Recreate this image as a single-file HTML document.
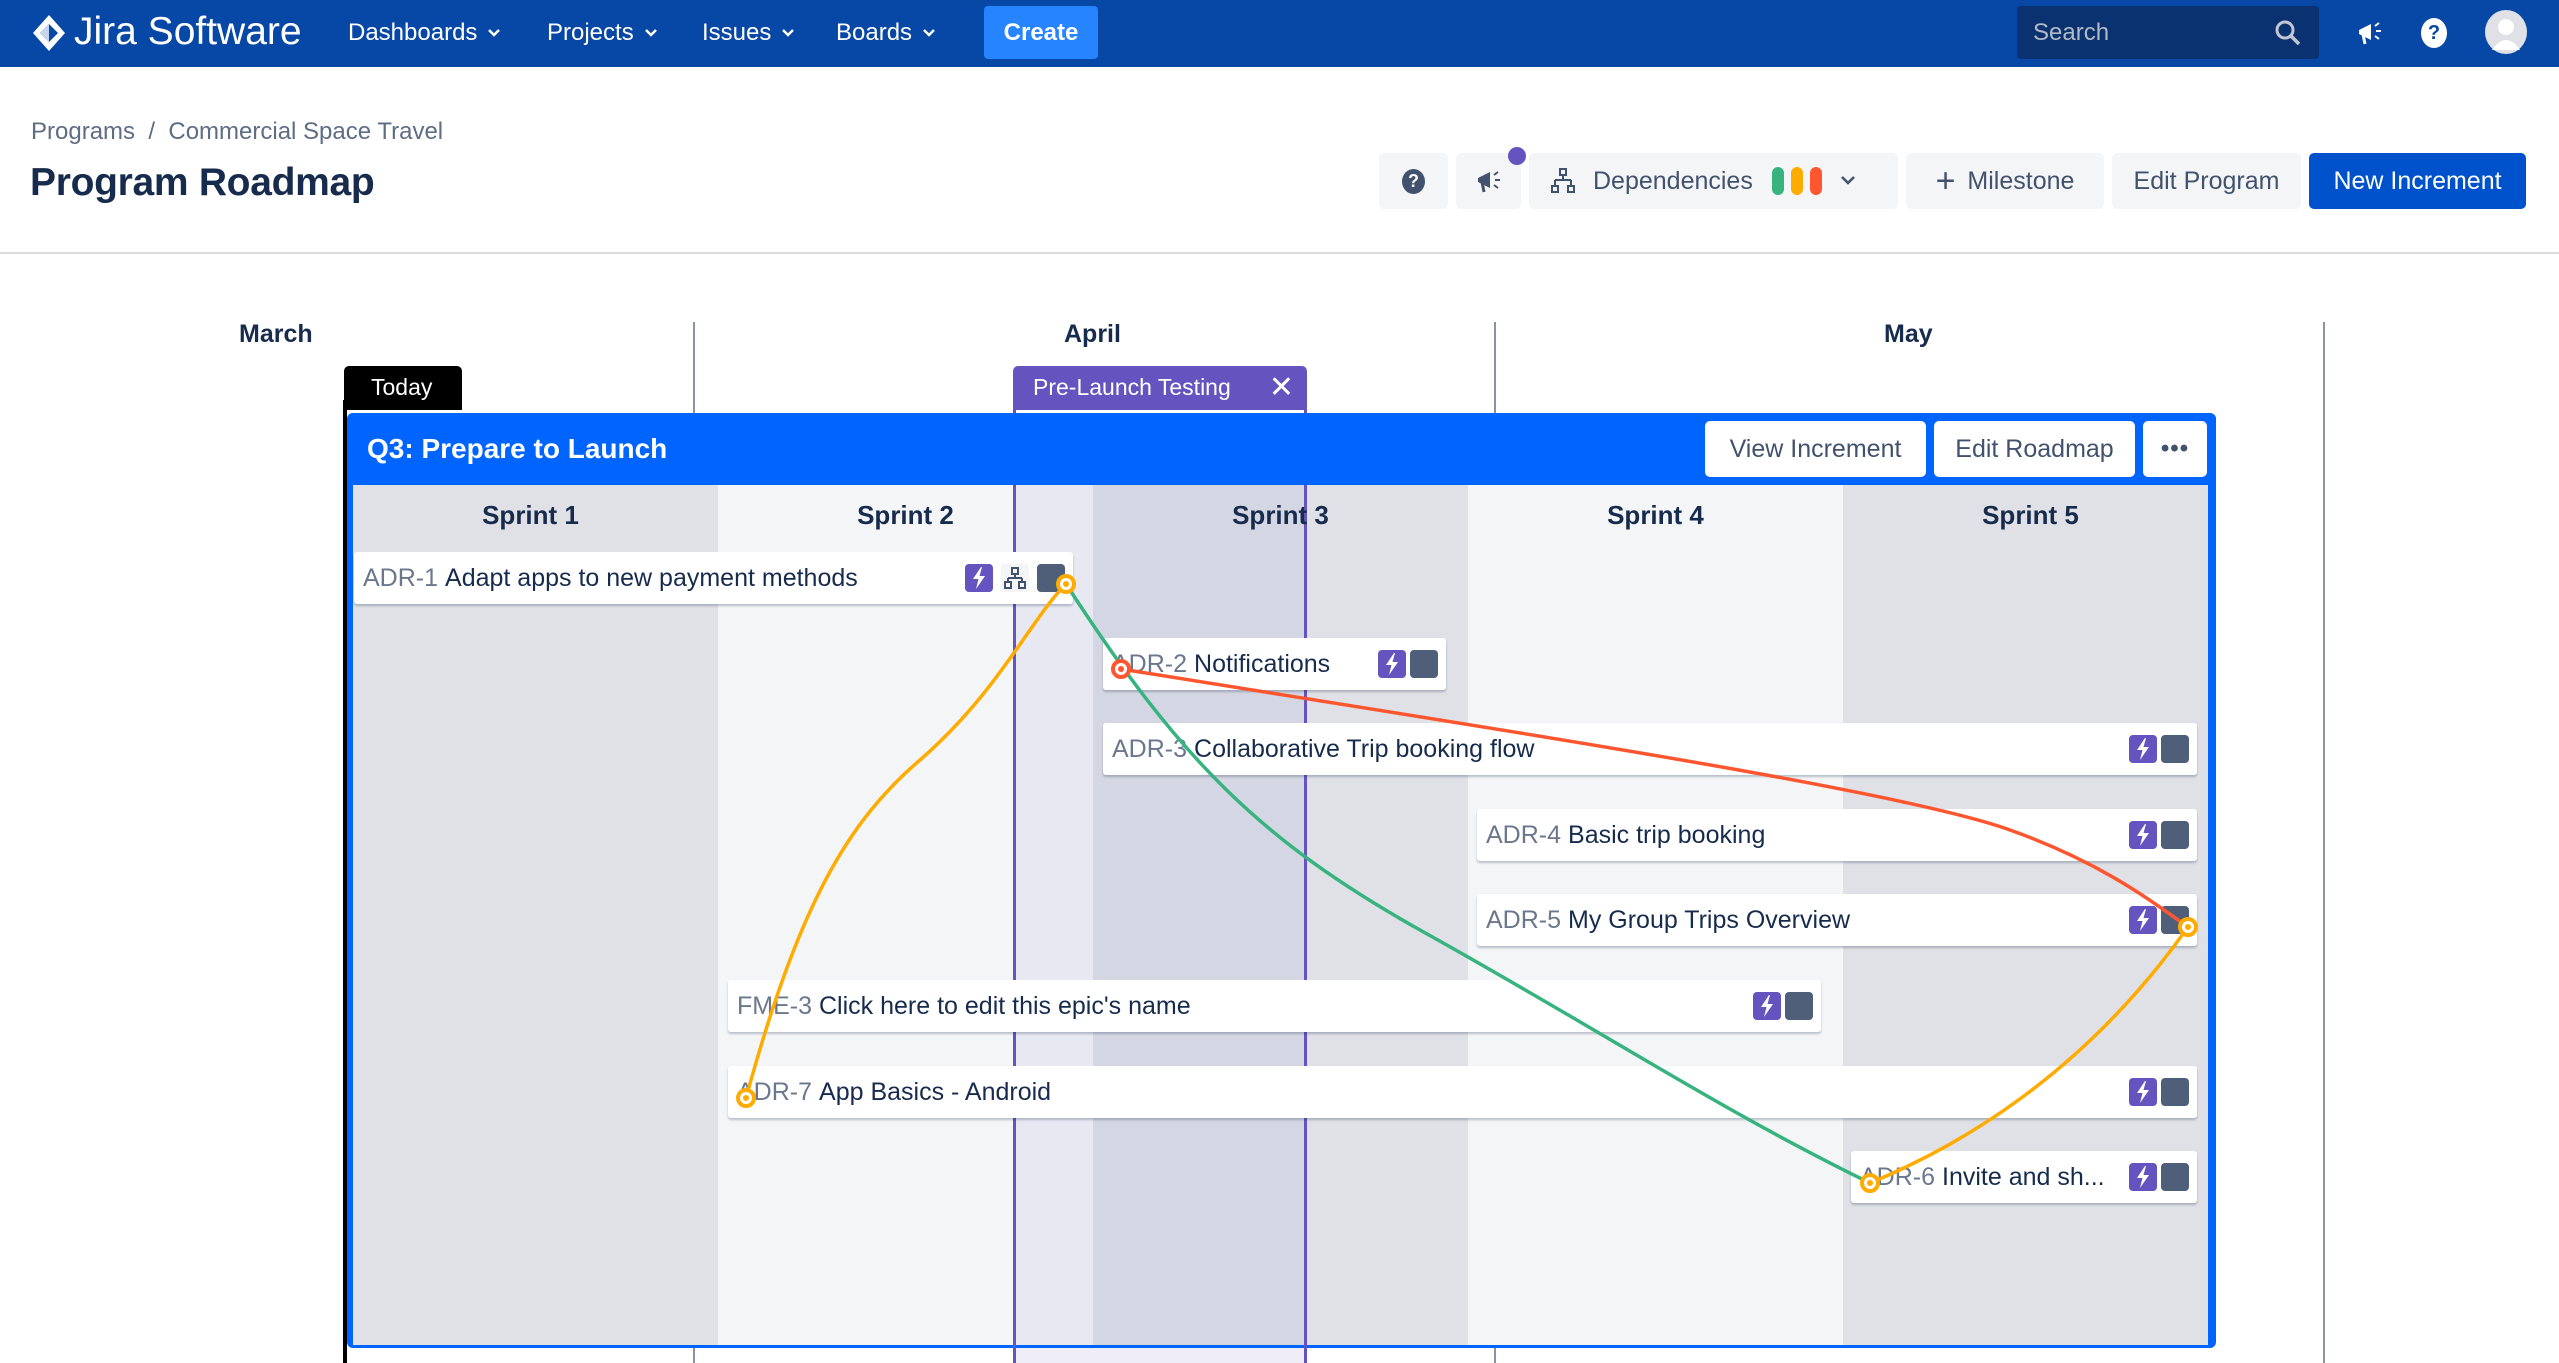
<!DOCTYPE html>
<html><head><meta charset="utf-8"><style>
*{box-sizing:border-box;margin:0;padding:0}
body{width:2559px;height:1363px;position:relative;overflow:hidden;background:#fff;font-family:"Liberation Sans",sans-serif;color:#172b4d}
.a{position:absolute}
.nav{left:0;top:0;width:2559px;height:67px;background:#0747a6}
.nt{color:#fff;font-size:24px;top:19px;display:flex;align-items:center}
.nt svg{margin-left:10px}
.btn{background:#f4f5f7;border-radius:5px;top:153px;height:56px;font-size:25px;color:#42526e;display:flex;align-items:center;justify-content:center}
.ml{top:322px;width:2px;height:1041px;background:#8993a4}
.mo{top:320px;font-size:25px;font-weight:bold;color:#172b4d}
.col{top:485px;height:860px}
.sp{top:500px;font-size:26px;font-weight:bold;color:#172b4d;text-align:center;width:375px}
.card{background:#fff;height:52px;border-radius:3px;box-shadow:0 2px 2px rgba(9,30,66,.25);font-size:25px;display:flex;align-items:center;padding-left:9px;white-space:nowrap}
.card .k{color:#6b778c;margin-right:7px}
.ic{position:absolute;top:12px;width:28px;height:28px;border-radius:4px}
.pu{background:#6554c0}
.sl{background:#505f79}
.wb{background:#fff;border-radius:5px;height:56px;top:421px;font-size:25px;color:#42526e;display:flex;align-items:center;justify-content:center}
</style></head><body>
<div class="a nav"></div>
<svg class="a" style="left:32px;top:15px" width="34" height="36" viewBox="0 0 34 36"><path d="M17 0 L33 18 L17 36 L1 18Z" fill="#fff"/><path d="M17 9 L26 18 L17 27 L8 18Z" fill="#0747a6"/><path d="M17 9 L17 27 L8 18Z" fill="#c7d5ec"/></svg>
<div class="a" style="left:74px;top:10px;color:#fff;font-size:39px">Jira Software</div>
<div class="a nt" style="left:348px">Dashboards<svg width="14" height="10"><path d="M2 2 L7 7 L12 2" stroke="#fff" stroke-width="2.5" fill="none"/></svg></div>
<div class="a nt" style="left:547px">Projects<svg width="14" height="10"><path d="M2 2 L7 7 L12 2" stroke="#fff" stroke-width="2.5" fill="none"/></svg></div>
<div class="a nt" style="left:702px">Issues<svg width="14" height="10"><path d="M2 2 L7 7 L12 2" stroke="#fff" stroke-width="2.5" fill="none"/></svg></div>
<div class="a nt" style="left:836px">Boards<svg width="14" height="10"><path d="M2 2 L7 7 L12 2" stroke="#fff" stroke-width="2.5" fill="none"/></svg></div>
<div class="a" style="left:984px;top:6px;width:114px;height:53px;background:#2684ff;border-radius:4px;color:#fff;font-size:24px;font-weight:bold;display:flex;align-items:center;justify-content:center">Create</div>
<div class="a" style="left:2017px;top:6px;width:302px;height:53px;background:#0a3270;border-radius:4px;color:#b3bac5;font-size:24px;padding:13px 0 0 16px">Search</div>
<svg class="a" style="left:2273px;top:18px" width="30" height="30"><circle cx="12" cy="12" r="8" stroke="#c1c7d0" stroke-width="3" fill="none"/><path d="M18 18 L26 26" stroke="#c1c7d0" stroke-width="3.5"/></svg>
<svg class="a" style="left:2355px;top:18px" width="30" height="30"><path d="M4 12 L16 6 L16 22 L4 16Z" fill="#fff"/><path d="M8 16 L10 26" stroke="#fff" stroke-width="3"/><path d="M20 8 L24 5 M21 13 L26 13 M20 18 L24 21" stroke="#fff" stroke-width="2"/></svg>
<div class="a" style="left:2421px;top:18px;width:26px;height:30px;border-radius:50%;background:#fff;color:#0747a6;font-weight:bold;font-size:20px;text-align:center;line-height:30px">?</div>
<div class="a" style="left:2485px;top:10px;width:42px;height:44px;border-radius:50%;background:#dfe1e6"></div>
<svg class="a" style="left:2485px;top:10px" width="42" height="44"><circle cx="21" cy="17" r="8" fill="#fff"/><path d="M7 40 Q21 20 35 40Z" fill="#fff"/></svg>

<div class="a" style="left:31px;top:118px;font-size:24px;color:#5e6c84">Programs &nbsp;/ &nbsp;Commercial Space Travel</div>
<div class="a" style="left:30px;top:161px;font-size:39px;font-weight:bold;color:#172b4d;letter-spacing:-0.3px">Program Roadmap</div>

<div class="a btn" style="left:1379px;width:69px"><div style="width:23px;height:25px;border-radius:50%;background:#42526e;color:#fff;font-size:18px;font-weight:bold;text-align:center;line-height:25px">?</div></div>
<div class="a btn" style="left:1456px;width:65px"><svg width="30" height="30"><path d="M4 12 L16 6 L16 22 L4 16Z" fill="#42526e"/><path d="M8 16 L10 26" stroke="#42526e" stroke-width="3"/><path d="M20 9 L24 6 M21 14 L26 14 M20 19 L24 22" stroke="#42526e" stroke-width="2"/></svg></div>
<div class="a" style="left:1508px;top:147px;width:18px;height:18px;border-radius:50%;background:#6554c0"></div>
<div class="a btn" style="left:1529px;width:369px;justify-content:flex-start;padding-left:22px"><svg width="24" height="26" style="margin-right:18px"><rect x="9" y="1" width="6" height="6" fill="none" stroke="#42526e" stroke-width="2"/><path d="M12 7 V12 M4 12 H20 M4 12 V18 M20 12 V18" stroke="#42526e" stroke-width="2" fill="none"/><rect x="1" y="18" width="6" height="6" fill="none" stroke="#42526e" stroke-width="2"/><rect x="17" y="18" width="6" height="6" fill="none" stroke="#42526e" stroke-width="2"/></svg>Dependencies<span style="display:inline-block;width:12px;height:28px;border-radius:6px;background:#36b37e;margin-left:19px"></span><span style="display:inline-block;width:12px;height:28px;border-radius:6px;background:#ffab00;margin-left:7px"></span><span style="display:inline-block;width:12px;height:28px;border-radius:6px;background:#ff5630;margin-left:7px"></span><svg width="16" height="12" style="margin-left:18px"><path d="M2 2 L8 8 L14 2" stroke="#42526e" stroke-width="2.5" fill="none"/></svg></div>
<div class="a btn" style="left:1906px;width:198px"><span style="font-size:34px;margin-right:12px;font-weight:300">+</span>Milestone</div>
<div class="a btn" style="left:2112px;width:189px">Edit Program</div>
<div class="a btn" style="left:2309px;width:217px;background:#0052cc;color:#fff">New Increment</div>
<div class="a" style="left:0;top:252px;width:2559px;height:2px;background:#dcdcdc"></div>

<div class="a mo" style="left:239px">March</div>
<div class="a mo" style="left:1064px">April</div>
<div class="a mo" style="left:1884px">May</div>
<div class="a ml" style="left:693px"></div>
<div class="a ml" style="left:1494px"></div>
<div class="a ml" style="left:2323px"></div>

<div class="a" style="left:344px;top:366px;width:118px;height:44px;background:#000;border-radius:5px 5px 0 0;color:#fff;font-size:23px;padding:8px 0 0 27px">Today</div>
<div class="a" style="left:343px;top:400px;width:4px;height:963px;background:#000"></div>

<div class="a" style="left:347px;top:413px;width:1869px;height:935px;background:#0065ff;border-radius:6px"></div>
<div class="a col" style="left:353px;width:365px;background:#dfe1e6"></div>
<div class="a col" style="left:718px;width:375px;background:#f4f5f7"></div>
<div class="a col" style="left:1093px;width:375px;background:#dfe1e6"></div>
<div class="a col" style="left:1468px;width:375px;background:#f4f5f7"></div>
<div class="a col" style="left:1843px;width:365px;background:#dfe1e6"></div>
<div class="a" style="left:1014px;top:485px;width:293px;height:860px;background:rgba(101,84,192,0.08)"></div>
<div class="a" style="left:1014px;top:1348px;width:293px;height:15px;background:#efeef8"></div>
<div class="a" style="left:1013px;top:405px;width:3px;height:958px;background:#6554c0"></div>
<div class="a" style="left:1304px;top:405px;width:3px;height:958px;background:#6554c0"></div>
<div class="a" style="left:1013px;top:366px;width:294px;height:44px;background:#6554c0;border-radius:5px 5px 0 0;color:#fff;font-size:23px;padding:8px 0 0 20px">Pre-Launch Testing<span style="position:absolute;right:13px;top:4px;font-size:30px">✕</span></div>
<div class="a" style="left:347px;top:413px;width:1869px;height:72px;background:#0065ff;border-radius:6px 6px 0 0"></div>
<div class="a" style="left:367px;top:433px;color:#fff;font-size:28px;font-weight:bold">Q3: Prepare to Launch</div>
<div class="a wb" style="left:1705px;width:221px">View Increment</div>
<div class="a wb" style="left:1934px;width:201px">Edit Roadmap</div>
<div class="a wb" style="left:2143px;width:64px;font-weight:bold;color:#42526e;font-size:24px;letter-spacing:1px">•••</div>

<div class="a sp" style="left:343px">Sprint 1</div>
<div class="a sp" style="left:718px">Sprint 2</div>
<div class="a sp" style="left:1093px">Sprint 3</div>
<div class="a sp" style="left:1468px">Sprint 4</div>
<div class="a sp" style="left:1843px">Sprint 5</div>

<svg width="0" height="0" style="position:absolute"><defs><symbol id="bolt" viewBox="0 0 28 28"><path d="M16 3 L8 15 H13.5 L11 25 L20 12 H14.5 L17 3Z" fill="#fff"/></symbol></defs></svg>

<div class="a card" style="left:354px;top:552px;width:719px"><span class="k">ADR-1</span>Adapt apps to new payment methods
<div class="ic pu" style="left:611px"><svg width="28" height="28"><use href="#bolt"/></svg></div>
<div class="ic" style="left:647px;background:#f4f5f7"><svg width="28" height="28"><rect x="11" y="4" width="6" height="6" fill="none" stroke="#42526e" stroke-width="2"/><path d="M14 10 V14 M7 14 H21 M7 14 V18 M21 14 V18" stroke="#42526e" stroke-width="2" fill="none"/><rect x="4" y="18" width="6" height="6" fill="none" stroke="#42526e" stroke-width="2"/><rect x="18" y="18" width="6" height="6" fill="none" stroke="#42526e" stroke-width="2"/></svg></div>
<div class="ic sl" style="left:683px"></div></div>

<div class="a card" style="left:1103px;top:638px;width:343px"><span class="k">ADR-2</span>Notifications
<div class="ic pu" style="left:275px"><svg width="28" height="28"><use href="#bolt"/></svg></div><div class="ic sl" style="left:307px"></div></div>

<div class="a card" style="left:1103px;top:723px;width:1094px"><span class="k">ADR-3</span>Collaborative Trip booking flow
<div class="ic pu" style="left:1026px"><svg width="28" height="28"><use href="#bolt"/></svg></div><div class="ic sl" style="left:1058px"></div></div>

<div class="a card" style="left:1477px;top:809px;width:720px"><span class="k">ADR-4</span>Basic trip booking
<div class="ic pu" style="left:652px"><svg width="28" height="28"><use href="#bolt"/></svg></div><div class="ic sl" style="left:684px"></div></div>

<div class="a card" style="left:1477px;top:894px;width:720px"><span class="k">ADR-5</span>My Group Trips Overview
<div class="ic pu" style="left:652px"><svg width="28" height="28"><use href="#bolt"/></svg></div><div class="ic sl" style="left:684px"></div></div>

<div class="a card" style="left:728px;top:980px;width:1093px"><span class="k">FME-3</span>Click here to edit this epic's name
<div class="ic pu" style="left:1025px"><svg width="28" height="28"><use href="#bolt"/></svg></div><div class="ic sl" style="left:1057px"></div></div>

<div class="a card" style="left:728px;top:1066px;width:1469px"><span class="k">ADR-7</span>App Basics - Android
<div class="ic pu" style="left:1401px"><svg width="28" height="28"><use href="#bolt"/></svg></div><div class="ic sl" style="left:1433px"></div></div>

<div class="a card" style="left:1851px;top:1151px;width:346px"><span class="k">ADR-6</span>Invite and sh...
<div class="ic pu" style="left:278px"><svg width="28" height="28"><use href="#bolt"/></svg></div><div class="ic sl" style="left:310px"></div></div>

<svg class="a" style="left:0;top:0" width="2559" height="1363">
<g fill="none" stroke-width="3.5">
<path d="M746 1098 C800 900, 850 820, 920 760 C1000 690, 1030 620, 1066 584" stroke="#ffab00"/>
<path d="M1066 584 C1180 760, 1260 840, 1420 930 C1600 1030, 1720 1110, 1870 1183" stroke="#36b37e"/>
<path d="M1121 669 C1500 730, 1900 790, 2010 830 C2100 862, 2150 900, 2188 927" stroke="#ff5630"/>
<path d="M1870 1183 C1950 1150, 2080 1080, 2188 927" stroke="#ffab00"/>
</g>
<g stroke-width="4" fill="#fff">
<circle cx="1066" cy="584" r="8" stroke="#ffab00"/><circle cx="1066" cy="584" r="3" fill="#ffab00" stroke="none"/>
<circle cx="746" cy="1098" r="8" stroke="#ffab00"/><circle cx="746" cy="1098" r="3" fill="#ffab00" stroke="none"/>
<circle cx="1870" cy="1183" r="8" stroke="#ffab00"/><circle cx="1870" cy="1183" r="3" fill="#ffab00" stroke="none"/>
<circle cx="2188" cy="927" r="8" stroke="#ffab00"/><circle cx="2188" cy="927" r="3" fill="#ffab00" stroke="none"/>
<circle cx="1121" cy="669" r="8" stroke="#ff5630"/><circle cx="1121" cy="669" r="3" fill="#ff5630" stroke="none"/>
</g>
</svg>
</body></html>
